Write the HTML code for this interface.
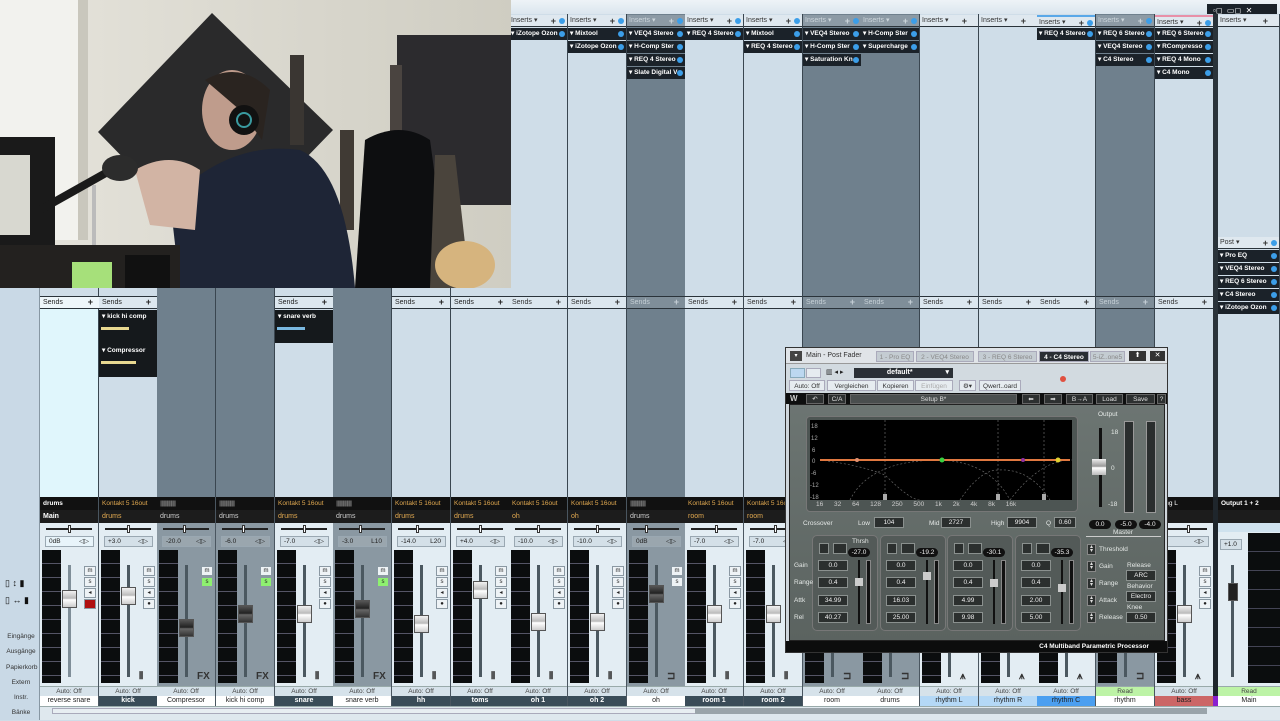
<!DOCTYPE html>
<html><head><meta charset="utf-8">
<style>
*{margin:0;padding:0;box-sizing:border-box}
body{width:1280px;height:720px;overflow:hidden;position:relative;background:#cfdde8;font-family:"Liberation Sans",sans-serif;font-size:7px;color:#222}
.a{position:absolute}
.col{position:absolute;top:14px;height:483px;width:59px;background:#cfdde8;border-right:1px solid #3a4650}
.col.d{background:#6f808d}
.ih{position:absolute;top:1px;left:0;right:0;height:12px;background:#dfe8ef;border-bottom:1px solid #2a333a;font-size:7px;line-height:12px;padding-left:2px;color:#333}
.d .ih{background:#8c9aa5;color:#cdd6dc}
.ih b{position:absolute;right:11px;top:0;font-size:9px}
.ih i{position:absolute;right:2px;top:3px;width:6px;height:6px;border-radius:50%;background:#3c9ee8}
.it{position:absolute;left:0;right:0;height:12px;background:#1b2229;color:#fff;font-size:6.5px;line-height:12px;padding-left:2px;white-space:nowrap;overflow:hidden;font-weight:bold}
.it i{position:absolute;right:2px;top:3px;width:6px;height:6px;border-radius:50%;background:#3c9ee8}
.sh{position:absolute;top:282px;left:0;right:0;height:13px;background:#dce7ef;border-top:1px solid #2a333a;border-bottom:1px solid #2a333a;line-height:12px;padding-left:3px;color:#333}
.d .sh{background:#7f8e99;color:#c6d0d6}
.sh b{position:absolute;right:6px;font-size:9px;top:-1px}
.ch{position:absolute;top:497px;width:59px;height:209px;background:#e3edf3;border-right:1px solid #4a5660}
.ch.d{background:#8a98a2}
.in{position:absolute;top:0;left:0;right:0;height:13px;background:#111;color:#e0a850;line-height:13px;padding-left:3px;white-space:nowrap;overflow:hidden;font-size:6.5px}
.mt{color:#777;letter-spacing:-1px}
.out{position:absolute;top:13px;left:0;right:0;height:13px;background:#1c1c1c;color:#e0a850;line-height:13px;padding-left:3px;font-size:7px}
.pan{position:absolute;top:31px;left:6px;width:46px;height:2px;background:#222}
.pan i{position:absolute;top:-3px;width:3px;height:8px;background:#fff;border:1px solid #333}
.val{position:absolute;top:39px;left:5px;width:49px;height:11px;background:#d4e0e8;border:1px solid #9aa8b2;line-height:10px;padding-left:3px;font-size:6.5px}
.d .val{background:#9aa6ae}
.val span{position:absolute;right:4px}
.met{position:absolute;top:53px;left:2px;width:19px;height:133px;background:#0b0d0e;background-image:repeating-linear-gradient(#0b0d0e 0 13px,#556 13px 14px)}
.trk{position:absolute;top:68px;left:28px;width:3px;height:112px;background:#4b5860}
.cap{position:absolute;left:22px;width:15px;height:18px;background:linear-gradient(#f2f2f2,#bbb 45%,#fff 55%,#ccc);border:1px solid #555}
.d .cap{background:linear-gradient(#555,#222 45%,#666 55%,#333)}
.bt{position:absolute;left:44px;width:12px;height:10px;background:#eef3f6;border:1px solid #8a98a2;font-size:6px;text-align:center;line-height:8px}
.au{position:absolute;top:189px;left:0;right:0;height:10px;background:#d6e2ea;text-align:center;line-height:10px;font-size:6.5px;color:#444;border-top:1px solid #9aa}
.nm{position:absolute;top:199px;left:0;right:0;height:10px;background:#fff;text-align:center;line-height:10px;font-size:7px;color:#222}
.nm.k{background:#3a4c58;color:#fff;font-weight:bold}
.fx{position:absolute;left:40px;top:174px;font-weight:bold;font-size:10px;color:#333}
/* plugin */
.pw{position:absolute;left:785px;top:347px;width:383px;height:306px;background:#cfd6dc;border:1px solid #333}
.tb{position:absolute;height:11px;line-height:11px;font-size:6.5px;text-align:center;color:#888;background:#c4ccd2;border:1px solid #aab}
.wb{position:absolute;height:10px;line-height:10px;font-size:6.5px;text-align:center;color:#ddd;background:#2d3030;border:1px solid #666}
.vb{position:absolute;height:11px;width:30px;background:#2b2f2e;color:#eee;font-size:6.5px;text-align:center;line-height:10px;border:1px solid #8a908e}
.lb{position:absolute;font-size:6.5px;color:#e4e8e6}
.pill{position:absolute;height:9px;background:#111;color:#eee;border-radius:5px;font-size:6.5px;text-align:center;line-height:9px}
.arr{position:absolute;width:9px;height:11px;background:#2b2f2e;border:1px solid #888;color:#ddd;font-size:6px;text-align:center;line-height:4px}
</style></head><body>

<!-- top light strip -->
<div class="a" style="left:510px;top:0;width:770px;height:14px;background:linear-gradient(#eef3f7,#dbe6ee)"></div>
<div class="a" style="left:1207px;top:4px;width:70px;height:13px;background:#1b2229"></div>
<div class="a" style="left:1213px;top:6px;color:#fff;font-size:8px">▫◻ &nbsp;▭◻ &nbsp;✕</div>

<!-- columns -->
<div class="col" style="left:40px"></div>
<div class="col" style="left:99px"></div>
<div class="col d" style="left:157px"></div>
<div class="col d" style="left:216px"></div>
<div class="col" style="left:275px"></div>
<div class="col d" style="left:333px"></div>
<div class="col" style="left:392px"></div>
<div class="col" style="left:451px"></div>
<div class="col" style="left:509px"><div class="ih">Inserts ▾<b>+</b><i></i></div><div class="it" style="top:14px">▾ iZotope Ozon<i></i></div><div class="sh">Sends<b>+</b></div></div>
<div class="col" style="left:568px"><div class="ih">Inserts ▾<b>+</b><i></i></div><div class="it" style="top:14px">▾ Mixtool<i></i></div><div class="it" style="top:27px">▾ iZotope Ozon<i></i></div><div class="sh">Sends<b>+</b></div></div>
<div class="col d" style="left:627px"><div class="ih">Inserts ▾<b>+</b><i></i></div><div class="it" style="top:14px">▾ VEQ4 Stereo<i></i></div><div class="it" style="top:27px">▾ H-Comp Ster<i></i></div><div class="it" style="top:40px">▾ REQ 4 Stereo<i></i></div><div class="it" style="top:53px">▾ Slate Digital V<i></i></div><div class="sh">Sends<b>+</b></div></div>
<div class="col" style="left:685px"><div class="ih">Inserts ▾<b>+</b><i></i></div><div class="it" style="top:14px">▾ REQ 4 Stereo<i></i></div><div class="sh">Sends<b>+</b></div></div>
<div class="col" style="left:744px"><div class="ih">Inserts ▾<b>+</b><i></i></div><div class="it" style="top:14px">▾ Mixtool<i></i></div><div class="it" style="top:27px">▾ REQ 4 Stereo<i></i></div><div class="sh">Sends<b>+</b></div></div>
<div class="col d" style="left:803px"><div class="ih">Inserts ▾<b>+</b><i></i></div><div class="it" style="top:14px">▾ VEQ4 Stereo<i></i></div><div class="it" style="top:27px">▾ H-Comp Ster<i></i></div><div class="it" style="top:40px">▾ Saturation Kn<i></i></div><div class="sh">Sends<b>+</b></div></div>
<div class="col d" style="left:861px"><div class="ih">Inserts ▾<b>+</b><i></i></div><div class="it" style="top:14px">▾ H-Comp Ster<i></i></div><div class="it" style="top:27px">▾ Supercharge<i></i></div><div class="sh">Sends<b>+</b></div></div>
<div class="col" style="left:920px"><div class="ih">Inserts ▾<b>+</b></div><div class="sh">Sends<b>+</b></div></div>
<div class="col" style="left:979px"><div class="ih">Inserts ▾<b>+</b></div><div class="sh">Sends<b>+</b></div></div>
<div class="col" style="left:1037px"><div class="ih" style="border-top:2px solid #5aa8e8">Inserts ▾<b>+</b><i></i></div><div class="it" style="top:14px">▾ REQ 4 Stereo<i></i></div><div class="sh">Sends<b>+</b></div></div>
<div class="col d" style="left:1096px"><div class="ih">Inserts ▾<b>+</b><i></i></div><div class="it" style="top:14px">▾ REQ 6 Stereo<i></i></div><div class="it" style="top:27px">▾ VEQ4 Stereo<i></i></div><div class="it" style="top:40px">▾ C4 Stereo<i></i></div><div class="sh">Sends<b>+</b></div></div>
<div class="col" style="left:1155px"><div class="ih" style="border-top:2px solid #e890a8">Inserts ▾<b>+</b><i></i></div><div class="it" style="top:14px">▾ REQ 6 Stereo<i></i></div><div class="it" style="top:27px">▾ RCompresso<i></i></div><div class="it" style="top:40px">▾ REQ 4 Mono<i></i></div><div class="it" style="top:53px">▾ C4 Mono<i></i></div><div class="sh">Sends<b>+</b></div></div>
<div class="a" style="left:1213px;top:14px;width:5px;height:483px;background:#2a333a"></div>
<div class="col" style="left:1218px;width:62px"><div class="ih">Inserts ▾<b>+</b></div>
 <div class="ih" style="top:223px">Post ▾<b>+</b><i></i></div>
 <div class="it" style="top:236px">▾ Pro EQ<i></i></div><div class="it" style="top:249px">▾ VEQ4 Stereo<i></i></div><div class="it" style="top:262px">▾ REQ 6 Stereo<i></i></div><div class="it" style="top:275px">▾ C4 Stereo<i></i></div><div class="it" style="top:288px">▾ iZotope Ozon<i></i></div></div>

<!-- lower sends for left channels -->
<div class="a" style="left:40px;top:296px;width:59px;height:201px;background:#e0f6fc;border-right:1px solid #3a4650"></div>
<div class="a" style="left:40px;top:296px;width:59px;height:13px;background:#eef6fa;border-top:1px solid #2a333a;border-bottom:1px solid #2a333a;padding-left:3px;line-height:12px">Sends<b style="position:absolute;right:6px;font-size:9px;top:-1px">+</b></div>
<div class="a" style="left:99px;top:296px;width:58px;height:13px;background:#dce7ef;border-top:1px solid #2a333a;border-bottom:1px solid #2a333a;padding-left:3px;line-height:12px">Sends<b style="position:absolute;right:6px;font-size:9px;top:-1px">+</b></div>
<div class="a" style="left:275px;top:296px;width:58px;height:13px;background:#dce7ef;border-top:1px solid #2a333a;border-bottom:1px solid #2a333a;padding-left:3px;line-height:12px">Sends<b style="position:absolute;right:6px;font-size:9px;top:-1px">+</b></div>
<div class="a" style="left:392px;top:296px;width:58px;height:13px;background:#dce7ef;border-top:1px solid #2a333a;border-bottom:1px solid #2a333a;padding-left:3px;line-height:12px">Sends<b style="position:absolute;right:6px;font-size:9px;top:-1px">+</b></div>
<div class="a" style="left:451px;top:296px;width:58px;height:13px;background:#dce7ef;border-top:1px solid #2a333a;border-bottom:1px solid #2a333a;padding-left:3px;line-height:12px">Sends<b style="position:absolute;right:6px;font-size:9px;top:-1px">+</b></div>
<div class="a" style="left:99px;top:310px;width:58px;height:67px;background:#15191c;color:#fff;font-weight:bold;font-size:6.5px;padding:2px 3px">▾ kick hi comp
 <div style="position:absolute;top:17px;left:2px;width:28px;height:3px;background:#e8d890"></div>
 <div style="position:absolute;top:36px;left:3px">▾ Compressor</div>
 <div style="position:absolute;top:51px;left:2px;width:35px;height:3px;background:#e8d890"></div></div>
<div class="a" style="left:275px;top:310px;width:58px;height:33px;background:#15191c;color:#fff;font-weight:bold;font-size:6.5px;padding:2px 3px">▾ snare verb
 <div style="position:absolute;top:17px;left:2px;width:28px;height:3px;background:#7ab8e0"></div></div>

<!-- left panel -->
<div class="a" style="left:0;top:288px;width:40px;height:432px;background:#c9d9e6;border-right:1px solid #8797a3"></div>
<div class="a" style="left:5px;top:578px;font-size:9px;color:#111">▯ ↕ ▮</div>
<div class="a" style="left:5px;top:595px;font-size:9px;color:#111">▯ ↔ ▮</div>
<div class="a" style="left:6px;top:629px;font-size:6.5px;line-height:15.3px;color:#333;text-align:center;width:30px">Eingänge<br>Ausgänge<br>Papierkorb<br>Extern<br>Instr.<br>Bänke</div>

<!-- channel strips -->
<div class="ch" style="left:40px"><div class="in" style="color:#fff;font-weight:bold">drums</div><div class="out" style="color:#fff;font-weight:bold">Main</div><div class="pan"><i style="left:22px"></i></div><div class="val" style="background:#e8f4fa">0dB<span>◁▷</span></div><div class="met"></div><div class="trk" style="background:#7f8e98"></div><div class="cap" style="top:93px"></div><div class="bt" style="top:69px">m</div><div class="bt" style="top:80px">s</div><div class="bt" style="top:91px">◂</div><div class="bt" style="top:102px;background:#b01010"></div><div class="au">Auto: Off</div><div class="nm">reverse snare</div></div>
<div class="ch" style="left:99px"><div class="in">Kontakt 5 16out</div><div class="out">drums</div><div class="pan"><i style="left:22px"></i></div><div class="val">+3.0<span>◁▷</span></div><div class="met"></div><div class="trk"></div><div class="cap" style="top:90px"></div><div class="bt" style="top:69px">m</div><div class="bt" style="top:80px">s</div><div class="bt" style="top:91px">◂</div><div class="bt" style="top:102px">●</div><div class="fx">⫴</div><div class="au">Auto: Off</div><div class="nm k">kick</div></div>
<div class="ch d" style="left:157px"><div class="in mt">||||||||||||||||||||||</div><div class="out" style="color:#ccc">drums</div><div class="pan"><i style="left:20px"></i></div><div class="val">-20.0<span>◁▷</span></div><div class="met"></div><div class="trk"></div><div class="cap" style="top:122px"></div><div class="bt" style="top:69px">m</div><div class="bt" style="top:80px;background:#8ef070">s</div><div class="fx">FX</div><div class="au">Auto: Off</div><div class="nm">Compressor</div></div>
<div class="ch d" style="left:216px"><div class="in mt">||||||||||||||||||||||</div><div class="out" style="color:#ccc">drums</div><div class="pan"><i style="left:20px"></i></div><div class="val">-6.0<span>◁▷</span></div><div class="met"></div><div class="trk"></div><div class="cap" style="top:108px"></div><div class="bt" style="top:69px">m</div><div class="bt" style="top:80px;background:#8ef070">s</div><div class="fx">FX</div><div class="au">Auto: Off</div><div class="nm">kick hi comp</div></div>
<div class="ch" style="left:275px"><div class="in">Kontakt 5 16out</div><div class="out">drums</div><div class="pan"><i style="left:22px"></i></div><div class="val">-7.0<span>◁▷</span></div><div class="met"></div><div class="trk"></div><div class="cap" style="top:108px"></div><div class="bt" style="top:69px">m</div><div class="bt" style="top:80px">s</div><div class="bt" style="top:91px">◂</div><div class="bt" style="top:102px">●</div><div class="fx">⫴</div><div class="au">Auto: Off</div><div class="nm k">snare</div></div>
<div class="ch d" style="left:333px"><div class="in mt">||||||||||||||||||||||</div><div class="out" style="color:#ccc">drums</div><div class="pan"><i style="left:20px"></i></div><div class="val">-3.0<span>L10</span></div><div class="met"></div><div class="trk"></div><div class="cap" style="top:103px"></div><div class="bt" style="top:69px">m</div><div class="bt" style="top:80px;background:#8ef070">s</div><div class="fx">FX</div><div class="au">Auto: Off</div><div class="nm">snare verb</div></div>
<div class="ch" style="left:392px"><div class="in">Kontakt 5 16out</div><div class="out">drums</div><div class="pan"><i style="left:18px"></i></div><div class="val">-14.0<span>L20</span></div><div class="met"></div><div class="trk"></div><div class="cap" style="top:118px"></div><div class="bt" style="top:69px">m</div><div class="bt" style="top:80px">s</div><div class="bt" style="top:91px">◂</div><div class="bt" style="top:102px">●</div><div class="fx">⫴</div><div class="au">Auto: Off</div><div class="nm k">hh</div></div>
<div class="ch" style="left:451px"><div class="in">Kontakt 5 16out</div><div class="out">drums</div><div class="pan"><i style="left:22px"></i></div><div class="val">+4.0<span>◁▷</span></div><div class="met"></div><div class="trk"></div><div class="cap" style="top:84px"></div><div class="bt" style="top:69px">m</div><div class="bt" style="top:80px">s</div><div class="bt" style="top:91px">◂</div><div class="bt" style="top:102px">●</div><div class="fx">⫴</div><div class="au">Auto: Off</div><div class="nm k">toms</div></div>
<div class="ch" style="left:509px"><div class="in">Kontakt 5 16out</div><div class="out">oh</div><div class="pan"><i style="left:22px"></i></div><div class="val">-10.0<span>◁▷</span></div><div class="met"></div><div class="trk"></div><div class="cap" style="top:116px"></div><div class="bt" style="top:69px">m</div><div class="bt" style="top:80px">s</div><div class="bt" style="top:91px">◂</div><div class="bt" style="top:102px">●</div><div class="fx">⫴</div><div class="au">Auto: Off</div><div class="nm k">oh 1</div></div>
<div class="ch" style="left:568px"><div class="in">Kontakt 5 16out</div><div class="out">oh</div><div class="pan"><i style="left:22px"></i></div><div class="val">-10.0<span>◁▷</span></div><div class="met"></div><div class="trk"></div><div class="cap" style="top:116px"></div><div class="bt" style="top:69px">m</div><div class="bt" style="top:80px">s</div><div class="bt" style="top:91px">◂</div><div class="bt" style="top:102px">●</div><div class="fx">⫴</div><div class="au">Auto: Off</div><div class="nm k">oh 2</div></div>
<div class="ch d" style="left:627px"><div class="in mt">||||||||||||||||||||||</div><div class="out" style="color:#ccc">drums</div><div class="pan"><i style="left:12px"></i></div><div class="val">0dB<span>◁▷</span></div><div class="met"></div><div class="trk"></div><div class="cap" style="top:88px"></div><div class="bt" style="top:69px">m</div><div class="bt" style="top:80px">s</div><div class="fx">⊐</div><div class="au">Auto: Off</div><div class="nm">oh</div></div>
<div class="ch" style="left:685px"><div class="in">Kontakt 5 16out</div><div class="out">room</div><div class="pan"><i style="left:24px"></i></div><div class="val">-7.0<span>◁▷</span></div><div class="met"></div><div class="trk"></div><div class="cap" style="top:108px"></div><div class="bt" style="top:69px">m</div><div class="bt" style="top:80px">s</div><div class="bt" style="top:91px">◂</div><div class="bt" style="top:102px">●</div><div class="fx">⫴</div><div class="au">Auto: Off</div><div class="nm k">room 1</div></div>
<div class="ch" style="left:744px"><div class="in">Kontakt 5 16out</div><div class="out">room</div><div class="pan"><i style="left:24px"></i></div><div class="val">-7.0<span>◁▷</span></div><div class="met"></div><div class="trk"></div><div class="cap" style="top:108px"></div><div class="fx">⫴</div><div class="au">Auto: Off</div><div class="nm k">room 2</div></div>
<div class="ch d" style="left:803px"><div class="met"></div><div class="trk"></div><div class="fx">⊐</div><div class="au">Auto: Off</div><div class="nm">room</div></div>
<div class="ch d" style="left:861px"><div class="met"></div><div class="trk"></div><div class="fx">⊐</div><div class="au">Auto: Off</div><div class="nm">drums</div></div>
<div class="ch" style="left:920px"><div class="met"></div><div class="trk"></div><div class="fx">⩚</div><div class="au">Auto: Off</div><div class="nm" style="background:#b4d8f6">rhythm L</div></div>
<div class="ch" style="left:979px"><div class="met"></div><div class="trk"></div><div class="fx">⩚</div><div class="au">Auto: Off</div><div class="nm" style="background:#b4d8f6">rhythm R</div></div>
<div class="ch" style="left:1037px"><div class="met"></div><div class="trk"></div><div class="fx">⩚</div><div class="au">Auto: Off</div><div class="nm" style="background:#4b9ff0">rhythm C</div></div>
<div class="ch d" style="left:1096px"><div class="met"></div><div class="trk"></div><div class="fx">⊐</div><div class="au" style="background:#bdf3a6">Read</div><div class="nm">rhythm</div></div>
<div class="ch" style="left:1155px"><div class="in" style="color:#fff">gang L</div><div class="out">h</div><div class="pan"><i style="left:26px"></i></div><div class="val">0<span>◁▷</span></div><div class="met"></div><div class="trk"></div><div class="cap" style="top:108px"></div><div class="bt" style="top:69px">m</div><div class="bt" style="top:80px">s</div><div class="bt" style="top:91px">◂</div><div class="bt" style="top:102px">●</div><div class="fx">⩚</div><div class="au">Auto: Off</div><div class="nm" style="background:#cc6666">bass</div></div>
<div class="a" style="left:1213px;top:497px;width:5px;height:209px;background:#1f262c"></div>
<div class="a" style="left:1213px;top:696px;width:5px;height:10px;background:#8a20d0"></div>
<div class="ch" style="left:1218px;width:62px;border:0"><div class="in" style="color:#fff;font-weight:bold">Output 1 + 2</div><div class="out"></div>
 <div class="a" style="top:26px;left:0;width:62px;height:9px;background:#cfe2ee"></div>
 <div class="val" style="top:42px;left:2px;width:22px">+1.0</div>
 <div class="a" style="top:36px;left:30px;width:32px;height:150px;background:#0b0d0e;background-image:repeating-linear-gradient(#0b0d0e 0 18px,#445 18px 19px)"></div>
 <div class="trk" style="left:13px"></div><div class="cap" style="top:86px;left:10px;width:10px;background:#222"></div>
 <div class="au" style="background:#bdf3a6">Read</div><div class="nm">Main</div></div>

<!-- scrollbar -->
<div class="a" style="left:40px;top:706px;width:1240px;height:14px;background:#dfe8ee;border-top:1px solid #9aa"></div>
<div class="a" style="left:52px;top:708px;width:1150px;height:6px;background:#e8eef2;border:1px solid #aab"></div>
<div class="a" style="left:695px;top:708px;width:512px;height:6px;background:#9aa4aa"></div>

<!-- video -->
<svg class="a" style="left:0;top:0" width="511" height="288" viewBox="0 0 511 288">
 <defs><linearGradient id="w" x1="0" x2="1"><stop offset="0" stop-color="#e6e4dc"/><stop offset="1" stop-color="#cfcdc2"/></linearGradient></defs>
 <rect width="511" height="288" fill="url(#w)"/>
 <rect x="0" y="0" width="85" height="240" fill="#f2f2ee"/>
 <rect x="78" y="0" width="10" height="240" fill="#c9c7bd"/>
 <polygon points="212,13 333,130 215,252 98,132" fill="#2a2a2b"/>
 <rect x="397" y="35" width="114" height="170" fill="#2c2b2e"/>
 <rect x="290" y="55" width="14" height="90" fill="#3a3632"/>
 <rect x="340" y="130" width="14" height="100" fill="#403a34"/>
 <rect x="390" y="65" width="12" height="80" fill="#4a4440"/>
 <rect x="0" y="137" width="55" height="108" fill="#1a1a1a"/>
 <rect x="0" y="155" width="30" height="80" fill="#d8d8d0"/>
 <path d="M365 140 Q400 120 430 140 L450 288 L355 288 Z" fill="#0d0e10"/>
 <path d="M435 155 L455 155 L470 288 L430 288 Z" fill="#4a443c"/>
 <ellipse cx="465" cy="265" rx="30" ry="24" fill="#d6b47e"/>
 <path d="M170 200 Q230 140 300 150 Q345 170 355 288 L180 288 Z" fill="#1e2536"/>
 <ellipse cx="232" cy="110" rx="30" ry="40" fill="#bf9c8c"/>
 <path d="M205 80 Q240 60 270 90 L262 140 L240 110 Z" fill="#2a2420"/>
 <circle cx="244" cy="120" r="15" fill="#111"/>
 <circle cx="244" cy="120" r="7" fill="none" stroke="#3a9aa0" stroke-width="2"/>
 <path d="M135 170 Q170 150 200 170 L195 230 L150 225 Z" fill="#d2b4a4"/>
 <path d="M40 210 L120 165" stroke="#1a1a1a" stroke-width="8"/>
 <ellipse cx="120" cy="168" rx="18" ry="13" fill="#2c2c2c"/>
 <rect x="92" y="185" width="4" height="80" fill="#bbb"/>
 <rect x="0" y="245" width="180" height="43" fill="#23211f"/>
 <rect x="72" y="262" width="40" height="26" fill="#a6e07a"/>
 <rect x="125" y="255" width="45" height="33" fill="#111"/>
</svg>

<!-- plugin window -->
<div class="pw">
 <div class="a" style="left:0;top:0;width:381px;height:16px;background:#e0e4e8;border-bottom:1px solid #999"></div>
 <div class="a" style="left:4px;top:3px;width:12px;height:10px;background:#444;color:#fff;text-align:center;font-size:6px;line-height:10px">▾</div>
 <div class="a" style="left:20px;top:4px;font-size:7px;color:#333">Main - Post Fader</div>
 <div class="tb" style="left:90px;top:3px;width:38px">1 - Pro EQ</div>
 <div class="tb" style="left:130px;top:3px;width:58px">2 - VEQ4 Stereo</div>
 <div class="tb" style="left:192px;top:3px;width:59px">3 - REQ 6 Stereo</div>
 <div class="tb" style="left:253px;top:3px;width:50px;background:#2a2e33;color:#fff;font-weight:bold">4 - C4 Stereo</div>
 <div class="tb" style="left:304px;top:3px;width:35px">5-iZ..one5</div>
 <div class="a" style="left:343px;top:3px;width:17px;height:10px;background:#333;color:#fff;text-align:center;font-size:7px">⬆</div>
 <div class="a" style="left:364px;top:3px;width:15px;height:10px;background:#333;color:#fff;text-align:center;font-size:7px">✕</div>
 <div class="a" style="left:0;top:16px;width:381px;height:29px;background:#d2dae0"></div>
 <div class="a" style="left:4px;top:20px;width:15px;height:10px;background:#bcd8f0;border:1px solid #8ab"></div>
 <div class="a" style="left:20px;top:20px;width:15px;height:10px;background:#e6ecf0;border:1px solid #aab"></div>
 <div class="a" style="left:40px;top:20px;width:26px;height:10px;font-size:7px">▥ ◂ ▸</div>
 <div class="a" style="left:68px;top:20px;width:99px;height:10px;background:#2b3036;color:#fff;font-size:7px;font-weight:bold;text-align:center;line-height:10px">default* <span style="float:right;margin-right:4px">▾</span></div>
 <div class="tb" style="left:3px;top:32px;width:36px;color:#333;background:#e6ecf0">Auto: Off</div>
 <div class="tb" style="left:41px;top:32px;width:49px;color:#333;background:#e6ecf0">Vergleichen</div>
 <div class="tb" style="left:91px;top:32px;width:37px;color:#333;background:#e6ecf0">Kopieren</div>
 <div class="tb" style="left:129px;top:32px;width:38px;color:#aaa;background:#e6ecf0">Einfügen</div>
 <div class="tb" style="left:173px;top:32px;width:17px;color:#333;background:#e6ecf0">⚙▾</div>
 <div class="tb" style="left:193px;top:32px;width:42px;color:#333;background:#e6ecf0">Qwert..oard</div>
 <div class="a" style="left:274px;top:28px;width:6px;height:6px;border-radius:50%;background:#e05040"></div>
 <div class="a" style="left:0;top:45px;width:381px;height:11px;background:#0e0f0f"></div>
 <div class="a" style="left:4px;top:46px;color:#ccc;font-weight:bold;font-size:8px">W</div>
 <div class="wb" style="left:20px;top:46px;width:18px">↶</div>
 <div class="wb" style="left:42px;top:46px;width:18px">C/A</div>
 <div class="wb" style="left:64px;top:46px;width:167px;background:#4a4e4e">Setup B*</div>
 <div class="wb" style="left:236px;top:46px;width:18px">⬅</div>
 <div class="wb" style="left:258px;top:46px;width:18px">➡</div>
 <div class="wb" style="left:280px;top:46px;width:27px">B→A</div>
 <div class="wb" style="left:310px;top:46px;width:27px">Load</div>
 <div class="wb" style="left:340px;top:46px;width:29px">Save</div>
 <div class="wb" style="left:371px;top:46px;width:9px">?</div>
 <!-- body -->
 <div class="a" style="left:3px;top:56px;width:376px;height:237px;background:linear-gradient(#6c7572,#5b6360);border:1px solid #222"></div>
 <div class="a" style="left:20px;top:68px;width:272px;height:96px;background:#4d5553;border-radius:4px;border:1px solid #777"></div>
 <svg class="a" style="left:24px;top:72px" width="262" height="80">
  <rect width="262" height="80" fill="#000"/>
  <g stroke="#666" stroke-dasharray="2,2" fill="none" stroke-width="0.7">
   <line x1="75" y1="0" x2="75" y2="80"/><line x1="188" y1="0" x2="188" y2="80"/><line x1="234" y1="0" x2="234" y2="80"/>
   <path d="M10 40 Q50 45 75 55 Q100 80 110 80"/><path d="M40 80 Q60 40 130 40 Q180 42 200 80"/>
   <path d="M150 80 Q170 50 188 50 Q220 48 240 80"/><path d="M200 80 Q230 40 262 40"/>
  </g>
  <line x1="10" y1="40" x2="260" y2="40" stroke="#e07840" stroke-width="2"/>
  <circle cx="47" cy="40" r="2" fill="#e09070"/><circle cx="132" cy="40" r="2.5" fill="#3ad040"/>
  <circle cx="213" cy="40" r="2" fill="#9030a0"/><circle cx="248" cy="40" r="2.5" fill="#e0d030"/>
  <rect x="73" y="74" width="4" height="6" fill="#aaa"/><rect x="186" y="74" width="4" height="6" fill="#aaa"/><rect x="232" y="74" width="4" height="6" fill="#aaa"/>
  <g fill="#aaa" font-size="6" font-family="Liberation Sans"><text x="1" y="8">18</text><text x="1" y="20">12</text><text x="2" y="32">6</text><text x="2" y="43">0</text><text x="1" y="55">-6</text><text x="0" y="67">-12</text><text x="0" y="79">-18</text></g>
 </svg>
 <div class="a" style="left:30px;top:153px;width:250px;font-size:6.5px;color:#ccc;word-spacing:9px;white-space:nowrap">16 32 64 128 250 500 1k 2k 4k 8k 16k</div>
 <div class="a" style="left:312px;top:63px" ><span class="lb" style="position:static">Output</span></div>
 <div class="a" style="left:313px;top:80px;width:3px;height:79px;background:#111"></div>
 <div class="a" style="left:306px;top:111px;width:14px;height:16px;background:linear-gradient(#eee,#999 45%,#fff 55%,#bbb)"></div>
 <div class="lb" style="left:325px;top:81px">18</div><div class="lb" style="left:325px;top:117px">0</div><div class="lb" style="left:322px;top:153px">-18</div>
 <div class="a" style="left:338px;top:73px;width:10px;height:92px;background:#2a2e2e;border:1px solid #999"></div>
 <div class="a" style="left:360px;top:73px;width:10px;height:92px;background:#2a2e2e;border:1px solid #999"></div>
 <div class="lb" style="left:17px;top:172px">Crossover</div>
 <div class="lb" style="left:72px;top:172px">Low</div><div class="vb" style="left:88px;top:169px">104</div>
 <div class="lb" style="left:143px;top:172px">Mid</div><div class="vb" style="left:155px;top:169px">2727</div>
 <div class="lb" style="left:205px;top:172px">High</div><div class="vb" style="left:221px;top:169px">9904</div>
 <div class="lb" style="left:260px;top:172px">Q</div><div class="vb" style="left:268px;top:169px;width:22px">0.60</div>
 <div class="pill" style="left:303px;top:172px;width:22px">0.0</div>
 <div class="pill" style="left:329px;top:172px;width:22px">-5.0</div>
 <div class="pill" style="left:353px;top:172px;width:22px">-4.0</div>
 <!-- band panels -->
 <div class="a" style="left:26px;top:187px;width:66px;height:96px;background:#535a58;border:1px solid #777;border-radius:5px"></div>
 <div class="a" style="left:94px;top:187px;width:66px;height:96px;background:#535a58;border:1px solid #777;border-radius:5px"></div>
 <div class="a" style="left:161px;top:187px;width:66px;height:96px;background:#535a58;border:1px solid #777;border-radius:5px"></div>
 <div class="a" style="left:229px;top:187px;width:66px;height:96px;background:#535a58;border:1px solid #777;border-radius:5px"></div>
 <div class="lb" style="left:8px;top:214px">Gain</div><div class="lb" style="left:8px;top:231px">Range</div><div class="lb" style="left:8px;top:249px">Attk</div><div class="lb" style="left:8px;top:266px">Rel</div>
 <div class="lb" style="left:66px;top:190px">Thrsh</div>
 <!-- band1 -->
 <div class="vb" style="left:33px;top:195px;width:10px"></div><div class="vb" style="left:47px;top:195px;width:14px"></div>
 <div class="pill" style="left:62px;top:200px;width:22px">-27.0</div>
 <div class="vb" style="left:32px;top:212px">0.0</div><div class="vb" style="left:32px;top:229px">0.4</div><div class="vb" style="left:32px;top:247px">34.99</div><div class="vb" style="left:32px;top:264px">40.27</div>
 <div class="a" style="left:72px;top:212px;width:2px;height:64px;background:#111"></div><div class="a" style="left:80px;top:212px;width:5px;height:64px;background:#111;border:1px solid #888"></div><div class="a" style="left:69px;top:230px;width:8px;height:8px;background:#ccc"></div>
 <!-- band2 -->
 <div class="vb" style="left:101px;top:195px;width:10px"></div><div class="vb" style="left:115px;top:195px;width:14px"></div>
 <div class="pill" style="left:130px;top:200px;width:22px">-19.2</div>
 <div class="vb" style="left:100px;top:212px">0.0</div><div class="vb" style="left:100px;top:229px">0.4</div><div class="vb" style="left:100px;top:247px">16.03</div><div class="vb" style="left:100px;top:264px">25.00</div>
 <div class="a" style="left:140px;top:212px;width:2px;height:64px;background:#111"></div><div class="a" style="left:148px;top:212px;width:5px;height:64px;background:#111;border:1px solid #888"></div><div class="a" style="left:137px;top:224px;width:8px;height:8px;background:#ccc"></div>
 <!-- band3 -->
 <div class="vb" style="left:168px;top:195px;width:10px"></div><div class="vb" style="left:182px;top:195px;width:14px"></div>
 <div class="pill" style="left:197px;top:200px;width:22px">-30.1</div>
 <div class="vb" style="left:167px;top:212px">0.0</div><div class="vb" style="left:167px;top:229px">0.4</div><div class="vb" style="left:167px;top:247px">4.99</div><div class="vb" style="left:167px;top:264px">9.98</div>
 <div class="a" style="left:207px;top:212px;width:2px;height:64px;background:#111"></div><div class="a" style="left:215px;top:212px;width:5px;height:64px;background:#111;border:1px solid #888"></div><div class="a" style="left:204px;top:231px;width:8px;height:8px;background:#ccc"></div>
 <!-- band4 -->
 <div class="vb" style="left:236px;top:195px;width:10px"></div><div class="vb" style="left:250px;top:195px;width:14px"></div>
 <div class="pill" style="left:265px;top:200px;width:22px">-35.3</div>
 <div class="vb" style="left:235px;top:212px">0.0</div><div class="vb" style="left:235px;top:229px">0.4</div><div class="vb" style="left:235px;top:247px">2.00</div><div class="vb" style="left:235px;top:264px">5.00</div>
 <div class="a" style="left:275px;top:212px;width:2px;height:64px;background:#111"></div><div class="a" style="left:283px;top:212px;width:5px;height:64px;background:#111;border:1px solid #888"></div><div class="a" style="left:272px;top:236px;width:8px;height:8px;background:#ccc"></div>
 <!-- master -->
 <div class="lb" style="left:300px;top:184px;width:75px;text-align:center;border-bottom:1px solid #ccc;height:5px"></div>
 <div class="lb" style="left:325px;top:181px;background:#636b68;padding:0 2px">Master</div>
 <div class="arr" style="left:301px;top:196px">▴<br>▾</div><div class="lb" style="left:313px;top:198px">Threshold</div>
 <div class="arr" style="left:301px;top:213px">▴<br>▾</div><div class="lb" style="left:313px;top:215px">Gain</div>
 <div class="arr" style="left:301px;top:230px">▴<br>▾</div><div class="lb" style="left:313px;top:232px">Range</div>
 <div class="arr" style="left:301px;top:247px">▴<br>▾</div><div class="lb" style="left:313px;top:249px">Attack</div>
 <div class="arr" style="left:301px;top:264px">▴<br>▾</div><div class="lb" style="left:313px;top:266px">Release</div>
 <div class="lb" style="left:341px;top:214px">Release</div><div class="vb" style="left:340px;top:222px">ARC</div>
 <div class="lb" style="left:341px;top:235px">Behavior</div><div class="vb" style="left:340px;top:243px">Electro</div>
 <div class="lb" style="left:341px;top:256px">Knee</div><div class="vb" style="left:340px;top:264px">0.50</div>
 <div class="a" style="left:0;top:293px;width:381px;height:11px;background:#0c0d0d;color:#fff;font-weight:bold;font-size:6.5px;text-align:right;padding-right:18px;line-height:11px">C4 Multiband Parametric Processor</div>
</div>
</body></html>
